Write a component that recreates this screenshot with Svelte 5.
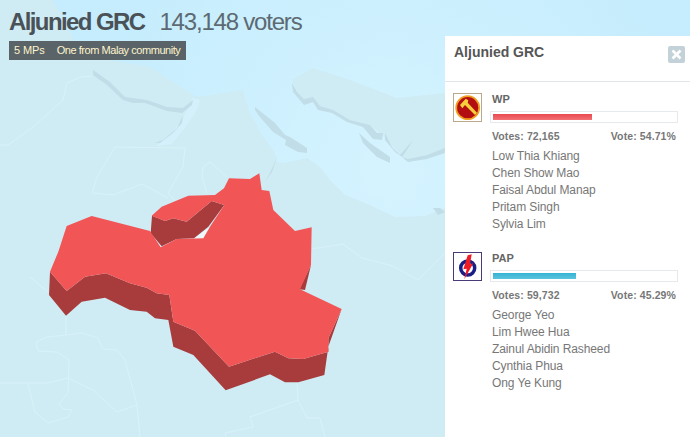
<script>
  const parties = [
    { id: 'wp', name: 'WP', votes: '72,165', pct: '54.71%', width: 99, names: ['Low Thia Khiang', 'Chen Show Mao', 'Faisal Abdul Manap', 'Pritam Singh', 'Sylvia Lim'] },
    { id: 'pap', name: 'PAP', votes: '59,732', pct: '45.29%', width: 83, names: ['George Yeo', 'Lim Hwee Hua', 'Zainul Abidin Rasheed', 'Cynthia Phua', 'Ong Ye Kung'] }
  ];
</script>

<div class="stage">
  <svg class="map" width="690" height="437" viewBox="0 0 690 437">
    <defs>
      <radialGradient id="sea" gradientUnits="userSpaceOnUse" cx="390" cy="170" r="300">
        <stop offset="0" stop-color="#d5f3ff"/>
        <stop offset="1" stop-color="#c6edfd"/>
      </radialGradient>
    </defs>
    <rect width="690" height="437" fill="url(#sea)"/>
    <g fill="#cfecf5">
      <path d="M0 0H52L62 16L78 48L90 56L150 67L193 95L200 97L243 90L250 113L262 135L275 153L277 162L283 163L307 158L320 167L330 180L345 195L370 205L395 217L425 216L445 208V437H0Z"/>
      <path d="M292 80L313 68L350 80L397 98L445 93V150L408 160L402 157L385 137L370 125L350 120L333 110L320 106L313 97L304 99L297 92Z"/>
    </g>
    <path d="M193 98L200 100L197 110L185 128L172 144L156 146L172 132L183 118Z" fill="#d4f1fb"/>
    <g fill="#c1dde7">
      <path d="M93 70L110 82L125 97L147 100L167 107L183 108L193 100L192 105L182 113L167 111L145 103L133 103L123 100L107 85L93 75Z"/>
      <path d="M183 115L177 128L163 140L155 143L160 143L173 133L182 123Z"/>
      <path d="M292 83L297 92L304 99L313 97L320 106L333 110L350 120L370 125L377 133L383 133L382 140L373 139L363 127L347 122L332 113L318 110L313 102L304 105L293 92Z"/>
      <path d="M255 107L275 123L285 135L290 137L307 148L307 153L298 152L285 145L286 140L273 132L260 117L255 110Z"/>
      <path d="M359 133L370 143L390 157L390 163L377 157L363 143Z"/>
      <path d="M385 133L392 147L400 155L413 140L407 150L402 157L395 152L385 140Z"/>
      <path d="M402 157L408 159L427 155L445 148V153L427 159L408 162Z"/>
      <path d="M277 157L270 173L265 182L272 172Z"/>
      <path d="M433 208L438 215L445 212L440 208Z"/>
    </g>
    <g class="roads">
      <path d="M0 145H8L33 127L63 100L67 83L80 77L92 76"/>
      <path d="M92 193L97 177L115 147L185 148L183 167L168 193L177 203"/>
      <path d="M92 193L113 195L142 184L168 198"/>
      <path d="M202 177L203 167L210 162L227 177M202 177L207 193"/>
      <path d="M30 277L48 292M66 315V335L47 337L36 342L38 351L57 352L69 360L68 393L59 404L63 409L72 410L68 417L48 423L35 412L28 384"/>
      <path d="M66 335L82 333L98 338L103 349L117 350L125 360L137 405L140 437"/>
      <path d="M0 383H47L68 378L93 390L117 412L137 405"/>
      <path d="M297 383L298 400L307 418L320 418L325 437M298 400L250 417L253 427L225 433L226 437"/>
      <path d="M312 249L343 244L362 258L393 266L418 280L445 253"/>
    </g>
    <g transform="translate(30 165) scale(.33333)">
      <path fill="#eef8fb" d="M490 222L525 222L540 185Z"/>
      <path fill="#a83c3c" d="M60 320L110 378L165 335L228 325L300 355L350 368L380 385L418 390L430 470L495 497L597 605L735 560L775 580L820 582L895 560L895 520L935 432L895 545L883 630L805 652L765 652L720 628L587 676L490 570L430 545L415 465L375 460L350 440L300 435L225 398L155 410L108 452L57 390Z"/>
      <path fill="#a83c3c" d="M843 300L825 375L808 373Z"/>
      <path fill="#a83c3c" d="M366 152L362 205L395 244L440 222L492 220L535 185L583 120L545 108L470 170L430 160L405 168Z"/>
      <path fill="#f15555" d="M110 183L185 153L360 198L392 247L440 222L520 220L540 185L583 120L545 108L470 170L430 160L405 168L365 152L395 125L475 92L555 90L582 70L597 40L660 42L688 25L695 75L718 78L730 135L795 198L845 187L843 300L810 373L935 432L895 520L895 560L820 582L775 580L735 560L597 605L495 497L430 470L418 390L380 385L350 368L300 355L228 325L165 335L110 378L60 320L85 260Z"/>
    </g>
  </svg>

  <header class="head">
    <h1><b>Aljunied GRC</b><span>143,148 voters</span></h1>
    <p class="tag"><span>5 MPs</span><span>One from Malay community</span></p>
  </header>

  <aside class="panel">
    <div class="title">
      <h2>Aljunied GRC</h2>
      <div class="close">
        <svg width="11" height="11" viewBox="0 0 11 11"><path d="M1.5 1.5L9.5 9.5M9.5 1.5L1.5 9.5" stroke="#fff" stroke-width="2.6" fill="none"/></svg>
      </div>
    </div>
    {#each parties as p}
      <section class="party">
        <div class="logo {p.id}">
          {#if p.id === 'wp'}
            <svg width="27" height="27" viewBox="0 0 27 27">
              <circle cx="13.7" cy="13.7" r="11.5" fill="#b30f12" stroke="#f0a020" stroke-width="1.8"/>
              <path d="M6 11L11.7 4.7L14.3 6.3L13.7 8.7L23 18.7L21 21L11 11L8.3 14.3Z" fill="#f7cf3c"/>
            </svg>
          {:else}
            <svg width="27" height="27" viewBox="0 0 27 27">
              <circle cx="13.7" cy="15" r="7" fill="none" stroke="#1a1f86" stroke-width="3.5"/>
              <path d="M13.7 2.3L17.7 1.3L16 11.3L19.3 10.3L10.3 26.3L12.7 15.7L9.3 16.3Z" fill="#ee1c25"/>
            </svg>
          {/if}
        </div>
        <div class="info">
          <h3>{p.name}</h3>
          <div class="bar"><div class="fill {p.id}" style="width:{p.width}px"></div></div>
          <div class="stats"><span>Votes: {p.votes}</span><span>Vote: {p.pct}</span></div>
          <ul>
            {#each p.names as n}<li>{n}</li>{/each}
          </ul>
        </div>
      </section>
    {/each}
  </aside>
</div>

<style>
  :global(body) { margin: 0; }
  .stage {
    position: relative;
    width: 690px;
    height: 437px;
    overflow: hidden;
    font-family: "Liberation Sans", Arial, sans-serif;
  }
  .map { position: absolute; left: 0; top: 0; display: block; }
  .roads path { fill: none; stroke: #d9f2f9; stroke-width: 1; }
  .head { position: absolute; left: 9px; top: 8px; }
  h1 {
    margin: 0;
    font-size: 24px;
    line-height: 28px;
    font-weight: 400;
    letter-spacing: -1.2px;
    color: #5c6a72;
    white-space: nowrap;
  }
  h1 b { color: #4a5257; margin-right: 15px; font-weight: 700; letter-spacing: -1.6px; }
  .tag {
    margin: 5px 0 0;
    width: 167px;
    height: 19px;
    padding: 0 5px;
    background: #5a6367;
    color: #fdf4cd;
    font-size: 11px;
    line-height: 19px;
    letter-spacing: -0.1px;
    display: flex;
    gap: 12px;
    white-space: nowrap;
  }
  .tag span + span { letter-spacing: -0.45px; }
  .panel {
    position: absolute;
    left: 445px;
    top: 36px;
    width: 245px;
    height: 401px;
    background: #fff;
    color: #777;
  }
  .title {
    height: 45px;
    border-bottom: 1px solid #e2e6e8;
    display: flex;
    justify-content: space-between;
    align-items: flex-start;
    padding: 0 5px 0 9px;
  }
  h2 { margin: 8px 0 0; font-size: 14px; line-height: 17px; color: #555; font-weight: 700; }
  .close {
    width: 17px;
    height: 17px;
    margin-top: 10px;
    border-radius: 2px;
    background: #c3d2d8;
    display: flex;
    align-items: center;
    justify-content: center;
  }
  .party { display: flex; padding: 11px 0 0 8px; }
  .party + .party { padding-top: 19px; }
  .logo {
    width: 27px;
    height: 27px;
    flex: none;
    border: 1px solid #b9a98a;
  }
  .logo.pap { border-color: #4a3a78; }
  .logo svg { display: block; }
  .info { margin-left: 8px; width: 188px; }
  h3 { margin: 0 0 0 2px; font-size: 11px; line-height: 13px; font-weight: 700; color: #666; }
  .bar {
    margin-top: 5px;
    height: 6px;
    padding: 2px;
    border: 1px solid #e6eaec;
    width: 182px;
    display: flex;
    align-items: center;
  }
  .fill { height: 6px; }
  .fill.wp { background: linear-gradient(#e94a50, #f27075); }
  .fill.pap { background: linear-gradient(#33b3d3, #5cc4de); }
  .stats {
    margin: 6px 2px 0 2px;
    display: flex;
    justify-content: space-between;
    font-size: 10.5px;
    line-height: 14px;
    font-weight: 700;
    color: #777;
    letter-spacing: 0.1px;
  }
  ul { list-style: none; margin: 5px 0 0 2px; padding: 0; }
  li { font-size: 12px; line-height: 17px; color: #777; letter-spacing: -0.1px; white-space: nowrap; }
</style>
